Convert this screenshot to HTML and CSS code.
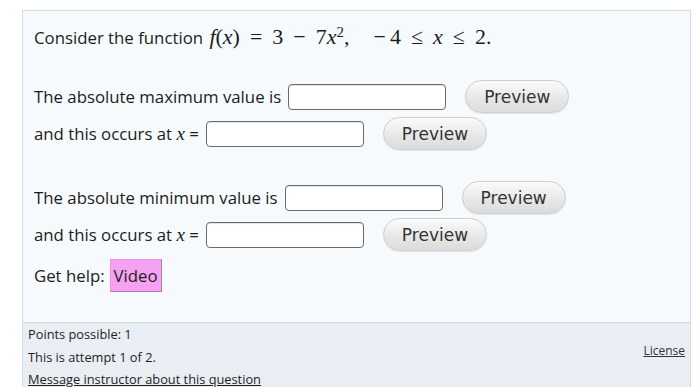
FILE: index.html
```html
<!DOCTYPE html>
<html>
<head>
<meta charset="utf-8">
<link rel="stylesheet" href="styles.css">
</head>
<body>
<div class="card">
  <div class="body">
    <div class="title">Consider the function <span class="math"><i>f</i>(<i>x</i>)<span class="op">=</span>3<span class="op">−</span>7<i>x</i><sup>2</sup>,<span class="sp"></span><span class="op un">−</span>4<span class="op">≤</span><i>x</i><span class="op">≤</span>2.</span></div>

    <div class="row r1"><span>The absolute maximum value is</span><span class="inp"></span><span class="btn">Preview</span></div>
    <div class="row"><span>and this occurs at <i class="mx">x</i> =</span><span class="inp"></span><span class="btn">Preview</span></div>

    <div class="row r3"><span>The absolute minimum value is</span><span class="inp"></span><span class="btn">Preview</span></div>
    <div class="row"><span>and this occurs at <i class="mx">x</i> =</span><span class="inp"></span><span class="btn">Preview</span></div>

    <div class="row help"><span>Get help:</span><span class="video">Video</span></div>
  </div>
  <div class="foot">
    <div class="info">
      <div>Points possible: 1</div>
      <div>This is attempt 1 of 2.</div>
      <div class="link">Message instructor about this question</div>
    </div>
    <div class="license">License</div>
  </div>
</div>
</body>
</html>
```

FILE: styles.css
```css
html, body {
  margin: 0;
  padding: 0;
  background: #ffffff;
  overflow: hidden;
}
body {
  font-family: "Open Sans", "Noto Sans", sans-serif;
  color: #1c1c1c;
}
.card {
  margin: 10px 0 0 22px;
  width: 667px;
  height: 400px;
  border: 1px solid #d3dbe3;
  background: #f6fafd;
  display: flex;
  flex-direction: column;
}
.body {
  padding: 0 0 0 11px;
  height: 311px;
  font-size: 16.8px;
}
.title {
  height: 52px;
  display: flex;
  align-items: center;
  margin-bottom: 15px;
  white-space: pre;
}
.math {
  font-family: "Liberation Serif", "DejaVu Serif", serif;
  font-size: 22px;
  margin-left: 2px;
}
.math i { font-style: italic; }
.math sup {
  font-size: 15px;
  vertical-align: 0.5em;
  line-height: 0;
}
.op { margin: 0 10px; }
.un { margin-right: 4px; }
.sp { display: inline-block; width: 14px; }
.mx {
  font-family: "Liberation Serif", serif;
  font-size: 19px;
}
.row {
  height: 37px;
  display: flex;
  align-items: center;
}
.r3 { margin-top: 27px; }
.inp {
  display: inline-block;
  width: 156px;
  height: 24px;
  margin-left: 7px;
  border: 1px solid #6b6b6b;
  border-radius: 4px;
  background: #ffffff;
  box-shadow: inset 0 1px 1px rgba(0,0,0,0.12);
}
.btn {
  display: inline-flex;
  align-items: center;
  justify-content: center;
  height: 31px;
  padding: 0 18px;
  margin-left: 19px;
  border: 1px solid #cdcdcd;
  border-radius: 17px;
  background: linear-gradient(#fbfbfb, #e6e6e6 60%, #dcdcdc);
  font-family: "DejaVu Sans", sans-serif;
  font-size: 17px;
  color: #333333;
  box-shadow: 0 1px 1px rgba(0,0,0,0.08);
}
.help { margin-top: 4px; }
.video {
  display: inline-flex;
  align-items: center;
  height: 31px;
  margin-left: 5px;
  padding: 0 3px;
  background: #f5a2f3;
  border: 1px solid #e790e5;
  border-right-color: #b774b5;
  border-bottom-color: #b774b5;
  color: #1e1e1e;
}
.foot {
  flex: 1;
  background: #e9eef4;
  border-top: 1px solid #cfd7df;
  display: flex;
  align-items: flex-start;
  justify-content: space-between;
  padding: 0 5px 0 5px;
  font-size: 12.8px;
  color: #1e1e1e;
}
.info {
  padding-top: 0;
  line-height: 22.5px;
}
.link { text-decoration: underline; }
.license {
  margin-top: 19px;
  text-decoration: underline;
  font-size: 12px;
  color: #333;
}
```
